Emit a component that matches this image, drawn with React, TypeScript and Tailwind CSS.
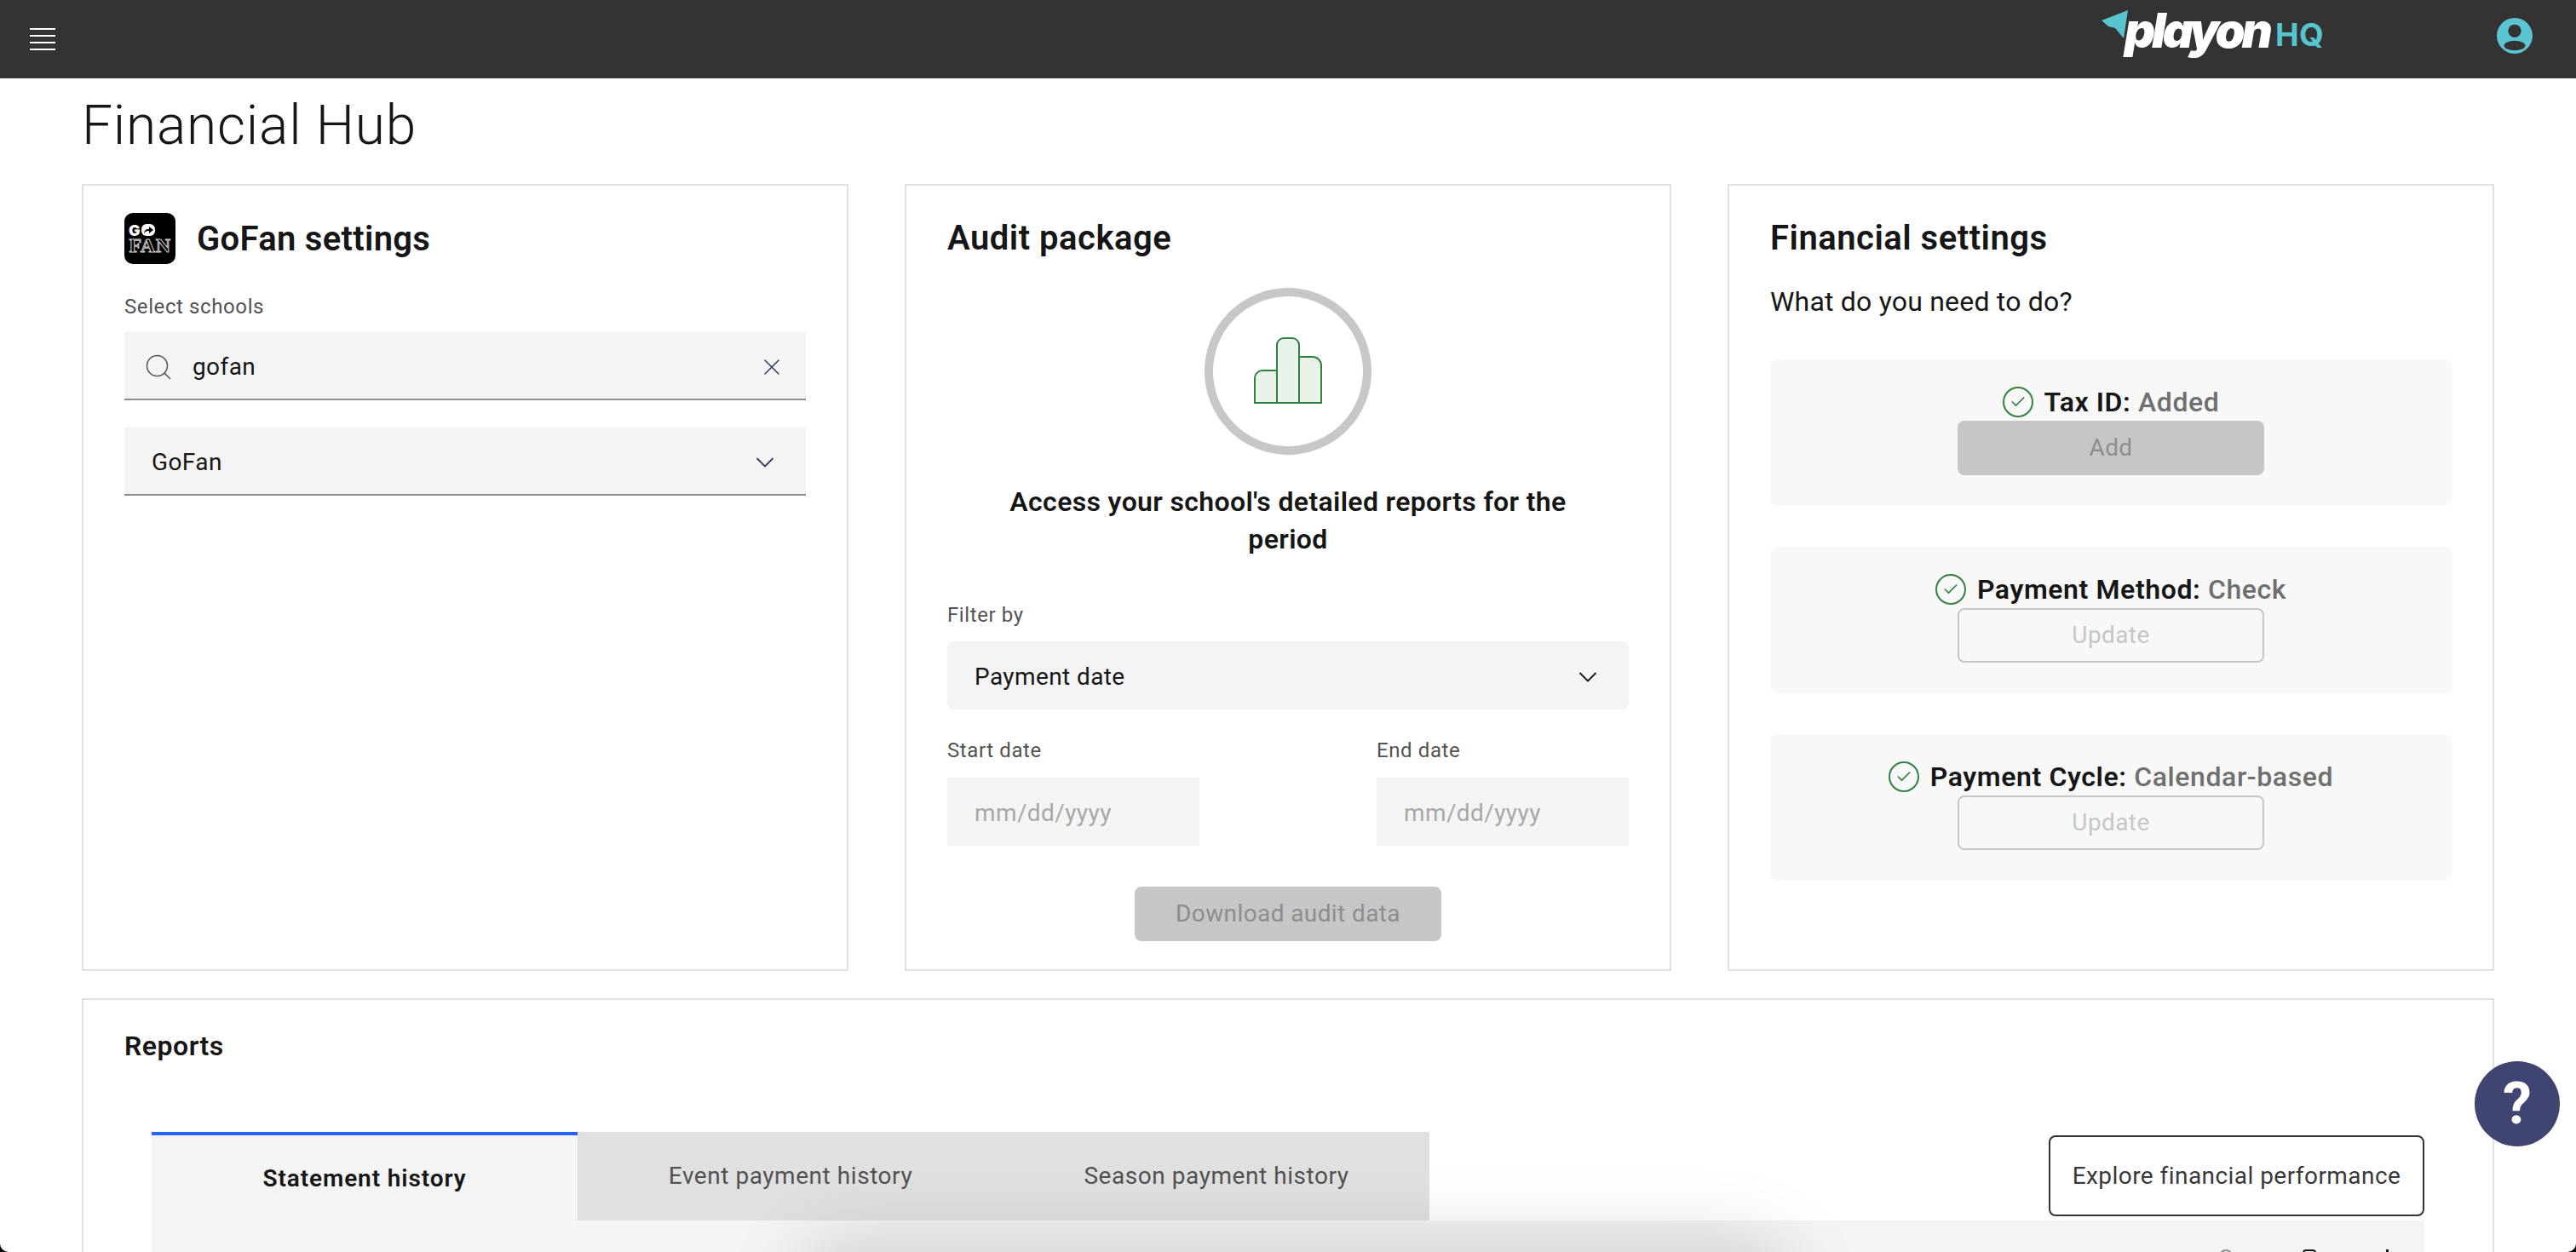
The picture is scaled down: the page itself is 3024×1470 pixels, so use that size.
import { Search, X, ChevronDown, Check } from "lucide-react";

const SETTINGS = [
  { label: "Tax ID:", value: "Added", action: "Add", filled: true },
  { label: "Payment Method:", value: "Check", action: "Update", filled: false },
  { label: "Payment Cycle:", value: "Calendar-based", action: "Update", filled: false },
];

function Header() {
  return (
    <header className="flex h-[92px] shrink-0 items-center justify-between bg-[#333333] pl-[35px] pr-[51px]">
      <div className="flex w-[30px] flex-col gap-[6px]">
        <span className="h-[2px] bg-white" />
        <span className="h-[2px] bg-white" />
        <span className="h-[2px] bg-white" />
        <span className="h-[2px] bg-white" />
      </div>
      <div className="flex items-center gap-[202px]">
        <div className="relative h-[92px] w-[262px]">
          <svg viewBox="0 0 32 34" className="absolute left-0 top-[12px] h-[34px] w-[32px]">
            <polygon points="0,12 31,0 26,33 16,21 8,19" fill="#56c5d0" />
          </svg>
          <span className="absolute left-[27px] top-[2px] font-['Inter',sans-serif] text-[56px] font-black italic leading-[68px] tracking-[-4px] text-white">
            playon
          </span>
          <span className="absolute left-[204px] top-[19px] font-['Inter',sans-serif] text-[37px] font-bold leading-[44px] text-[#56c5d0]">
            HQ
          </span>
        </div>
        <svg viewBox="0 0 44 44" className="mb-[8px] h-[42px] w-[42px]">
          <circle cx="22" cy="22" r="22" fill="#5bc5d3" />
          <circle cx="22" cy="16" r="8" fill="#333333" />
          <ellipse cx="22" cy="34" rx="13" ry="6" fill="#333333" />
        </svg>
      </div>
    </header>
  );
}

function Card({ children }: { children: React.ReactNode }) {
  return <div className="h-[924px] border-2 border-[#e0e0e0] bg-white px-[48px]">{children}</div>;
}

function Label({ children }: { children: React.ReactNode }) {
  return <div className="text-[24px] leading-[32px] tracking-[0.6px] text-[#525252]">{children}</div>;
}

function GoFanLogo() {
  return (
    <div className="flex h-[60px] w-[60px] flex-col items-center justify-center rounded-[10px] bg-black">
      <div className="flex w-[50px] items-center gap-[1px]">
        <span className="font-['Inter',sans-serif] text-[18px] font-black leading-[15px] text-white">G</span>
        <svg viewBox="0 0 16 14" className="h-[14px] w-[16px]">
          <rect x="0" y="0" width="16" height="14" rx="6" fill="#ffffff" />
          <path d="M3 11c0-3 2-5 6-5V3l5 4-5 4V8c-3 0-5 1-6 3z" fill="#000000" />
        </svg>
      </div>
      <span className="mt-[1px] font-['Liberation_Serif',serif] text-[24px] font-bold leading-[19px] tracking-[0.5px] text-black [-webkit-text-stroke:1px_#cfcfcf]">
        FAN
      </span>
    </div>
  );
}

function GoFanCard() {
  return (
    <Card>
      <div className="flex items-center gap-[25px] pt-[32px]">
        <GoFanLogo />
        <h2 className="pt-[2px] text-[40px] font-semibold leading-[58px] tracking-[0.3px] text-[#161616]">GoFan settings</h2>
      </div>
      <div className="mt-[34px]">
        <Label>Select schools</Label>
      </div>
      <div className="mt-[14px] flex h-[80px] items-center border-b-2 border-[#8d8d8d] bg-[#f4f4f4] pl-[22px] pr-[24px] pt-[3px]">
        <Search size={36} strokeWidth={1} className="text-[#525252]" />
        <span className="ml-[22px] flex-1 text-[28px] text-[#161616]">gofan</span>
        <X size={32} strokeWidth={1.2} className="text-[#323a6a]" />
      </div>
      <div className="mt-[32px] flex h-[80px] items-center justify-between border-b-2 border-[#8d8d8d] bg-[#f4f4f4] pl-[32px] pr-[30px] pt-[3px]">
        <span className="text-[28px] text-[#161616]">GoFan</span>
        <ChevronDown size={36} strokeWidth={1.2} className="text-[#323a6a]" />
      </div>
    </Card>
  );
}

function AuditCard() {
  return (
    <Card>
      <h2 className="pt-[32px] text-[40px] font-semibold leading-[60px] tracking-[0.5px] text-[#161616]">Audit package</h2>
      <div className="mt-[28px] flex justify-center">
        <div className="flex h-[196px] w-[196px] items-center justify-center rounded-full border-[10px] border-[#c8c6c8]">
          <svg viewBox="0 0 80 78" className="mb-[2px] h-[78px] w-[80px]" fill="#e8f2ea" stroke="#33813f" strokeWidth="2">
            <path d="M1 77V48a9 9 0 0 1 9-9h17v38z" />
            <path d="M27 77V9a8 8 0 0 1 8-8h10a8 8 0 0 1 8 8v68z" />
            <path d="M53 77V23h16a10 10 0 0 1 10 10v44z" />
          </svg>
        </div>
      </div>
      <p className="mx-auto mt-[33px] w-[720px] text-center text-[32px] font-semibold leading-[44px] tracking-[0.35px] text-[#161616]">
        Access your school's detailed reports for the period
      </p>
      <div className="mt-[51px]">
        <Label>Filter by</Label>
      </div>
      <div className="mt-[15px] flex h-[80px] items-center justify-between rounded-[8px] bg-[#f4f4f4] pl-[32px] pr-[30px] pt-[3px]">
        <span className="text-[28px] text-[#161616]">Payment date</span>
        <ChevronDown size={36} strokeWidth={1.2} className="text-[#161616]" />
      </div>
      <div className="mt-[32px] flex justify-between">
        <div className="w-[296px]">
          <Label>Start date</Label>
          <div className="mt-[16px] flex h-[80px] items-center bg-[#f4f4f4] pl-[32px] pt-[3px] text-[28px] text-[#a8a8a8]">mm/dd/yyyy</div>
        </div>
        <div className="w-[296px]">
          <Label>End date</Label>
          <div className="mt-[16px] flex h-[80px] items-center bg-[#f4f4f4] pl-[32px] pt-[3px] text-[28px] text-[#a8a8a8]">mm/dd/yyyy</div>
        </div>
      </div>
      <div className="mt-[48px] flex justify-center">
        <div className="flex h-[64px] w-[360px] items-center justify-center rounded-[8px] bg-[#c6c6c6] text-[28px] text-[#8d8d8d]">
          Download audit data
        </div>
      </div>
    </Card>
  );
}

function SettingRow({ label, value, action, filled }: (typeof SETTINGS)[number]) {
  return (
    <div className="flex h-[172px] flex-col items-center rounded-[8px] bg-[#f8f8f8] pt-[32px]">
      <div className="flex h-[40px] items-center gap-[13px] pb-[4px] text-[32px] font-semibold leading-[36px] tracking-[0.6px]">
        <div className="flex h-[36px] w-[36px] items-center justify-center rounded-full border-2 border-[#33813f]">
          <Check size={20} strokeWidth={2} className="text-[#33813f]" />
        </div>
        <div>
          <span className="text-[#161616]">{label}</span> <span className="font-medium text-[#6f6f6f]">{value}</span>
        </div>
      </div>
      {filled ? (
        <div className="flex h-[64px] w-[360px] items-center justify-center rounded-[8px] bg-[#c6c6c6] text-[28px] text-[#8d8d8d]">
          {action}
        </div>
      ) : (
        <div className="flex h-[64px] w-[360px] items-center justify-center rounded-[8px] border-2 border-[#c6c6c6] text-[28px] text-[#c6c6c6]">
          {action}
        </div>
      )}
    </div>
  );
}

function FinancialCard() {
  return (
    <Card>
      <h2 className="pt-[32px] text-[40px] font-semibold leading-[60px] tracking-[0.5px] text-[#161616]">Financial settings</h2>
      <p className="mt-[22px] text-[32px] leading-[44px] tracking-[0.2px] text-[#161616]">What do you need to do?</p>
      <div className="mt-[46px] flex flex-col gap-[48px]">
        {SETTINGS.map((s) => (
          <SettingRow key={s.label} {...s} />
        ))}
      </div>
    </Card>
  );
}

function Reports() {
  return (
    <section className="mt-[32px] h-[400px] border-2 border-[#e0e0e0] bg-white pl-[48px] pr-[80px]">
      <h2 className="pt-[32px] text-[32px] font-semibold leading-[44px] tracking-[0.5px] text-[#161616]">Reports</h2>
      <div className="ml-[32px] mt-[79px] flex items-end justify-between">
        <div className="flex">
          <div className="flex h-[104px] w-[500px] items-center justify-center border-t-4 border-[#2563ff] bg-[#f4f4f4] pt-[2px] text-[28px] font-semibold tracking-[0.9px] text-[#161616]">
            Statement history
          </div>
          <div className="flex h-[104px] w-[500px] items-center justify-center bg-[#e0e0e0] text-[28px] tracking-[0.55px] text-[#525252]">
            Event payment history
          </div>
          <div className="flex h-[104px] w-[500px] items-center justify-center bg-[#e0e0e0] text-[28px] tracking-[0.55px] text-[#525252]">
            Season payment history
          </div>
        </div>
        <div className="mb-[5px] flex h-[95px] w-[441px] items-center justify-center rounded-[8px] border-2 border-[#333333] text-[28px] tracking-[0.45px] text-[#393939]">
          Explore financial performance
        </div>
      </div>
      <div className="ml-[32px] flex h-[40px] items-start justify-end gap-[82px] overflow-hidden bg-[#f4f4f4] pr-[42px] pt-[34px]">
        <span className="h-[16px] w-[16px] shrink-0 rounded-full border-2 border-[#8d8d8d]" />
        <span className="h-[16px] w-[16px] shrink-0 rounded-[4px] border-2 border-[#161616]" />
        <span className="h-[10px] w-[3px] shrink-0 bg-[#161616]" />
      </div>
    </section>
  );
}

export default function App() {
  return (
    <div className="h-[1470px] bg-black">
      <div className="relative flex h-full flex-col overflow-hidden rounded-b-[10px] bg-white font-['Roboto',sans-serif] tracking-[0.4px]">
        <Header />
        <main className="px-[96px]">
          <h1 className="h-[124px] pt-[14px] text-[64px] font-light leading-[84px] tracking-[0.8px] text-[#161616]">Financial Hub</h1>
          <div className="grid grid-cols-3 gap-[66px]">
            <GoFanCard />
            <AuditCard />
            <FinancialCard />
          </div>
          <Reports />
        </main>
        <div className="absolute left-[980px] top-[1500px] h-[40px] w-[1080px] rounded-full shadow-[0_0_90px_40px_rgba(0,0,0,0.17)]" />
        <div className="absolute left-[2905px] top-[1246px] flex h-[100px] w-[100px] items-center justify-center rounded-full bg-[#3f4570] text-[68px] font-bold text-white">
          ?
        </div>
      </div>
    </div>
  );
}
